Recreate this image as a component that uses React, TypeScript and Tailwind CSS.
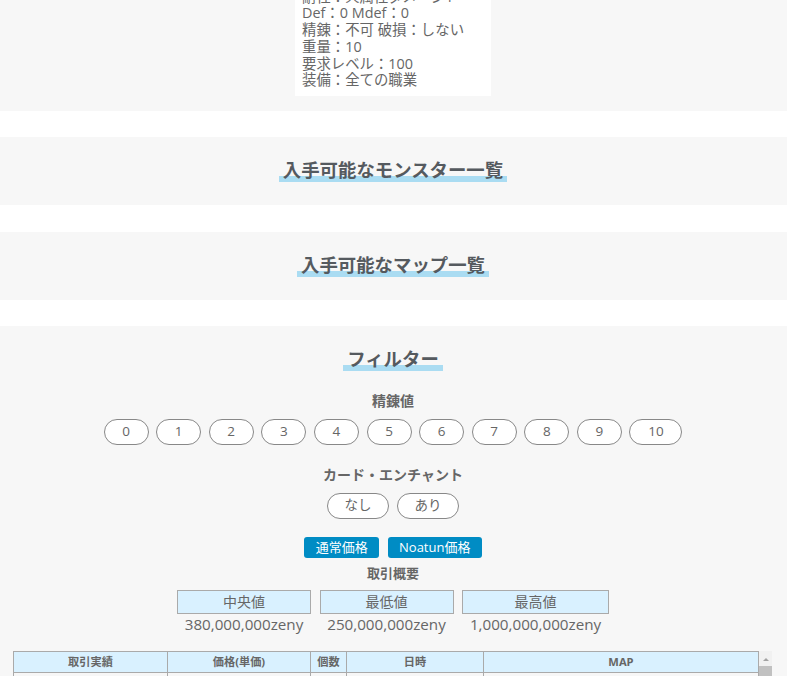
const font = "font-['Open_Sans','Noto_Sans_CJK_JP',sans-serif]"

const Heading = ({ text }: { text: string }) => (
  <div className="flex justify-center">
    <h2 className="px-1 text-[18.4px] leading-[24px] font-bold text-[#555a5f] bg-[linear-gradient(transparent_75%,#aadcf2_75%)]">
      {text}
    </h2>
  </div>
)

const Pill = ({ label, w }: { label: string; w: string }) => (
  <button className={`${w} h-[26px] rounded-full border border-[#888] bg-white text-[13.5px] leading-none text-[#666]`}>
    {label}
  </button>
)

const PriceCol = ({ title, value, w }: { title: string; value: string; w: string }) => (
  <div className={`${w} flex flex-col items-center`}>
    <div className="w-full h-[24px] border border-[#aaa] bg-[#d9f1ff] text-center text-[14px] leading-[22px] text-[#666]">{title}</div>
    <div className="text-[15.2px] leading-[21px] text-[#666]">{value}</div>
  </div>
)

export default function App() {
  const refine = ['0', '1', '2', '3', '4', '5', '6', '7', '8', '9']
  const cols = ['取引実績', '価格(単価)', '個数', '日時', 'MAP']
  return (
    <div lang="ja" className={`${font} w-[787px] h-[676px] overflow-hidden bg-white text-[#666]`}>
      <section className="h-[111px] pr-px bg-[#f7f7f7] flex justify-center items-start overflow-hidden">
        <div className="w-[196px] h-[96px] shrink-0 bg-white px-[7px] pb-[7px] flex flex-col justify-end text-[14.4px] leading-[16.7px]">
          <p>耐性：火属性ダメージ1</p>
          <p>Def：0 Mdef：0</p>
          <p>精錬：不可 破損：しない</p>
          <p>重量：10</p>
          <p>要求レベル：100</p>
          <p>装備：全ての職業</p>
        </div>
      </section>

      <section className="mt-[26px] h-[68px] pr-px bg-[#f7f7f7] pt-[21px]">
        <Heading text="入手可能なモンスター一覧" />
      </section>

      <section className="mt-[27px] h-[68px] pr-px bg-[#f7f7f7] pt-[21px]">
        <Heading text="入手可能なマップ一覧" />
      </section>

      <section className="mt-[26px] h-[350px] pr-px bg-[#f7f7f7] pt-[21px] overflow-hidden">
        <Heading text="フィルター" />

        <p className="mt-[21px] text-center text-[14px] leading-[18px] font-bold">精錬値</p>
        <div className="mt-[9px] flex justify-center gap-[7.6px]">
          {refine.map((n) => (
            <Pill key={n} label={n} w="w-[45px]" />
          ))}
          <Pill label="10" w="w-[53px]" />
        </div>

        <p className="mt-[21px] text-center text-[14px] leading-[18px] font-bold">カード・エンチャント</p>
        <div className="mt-[9px] flex justify-center gap-[8px]">
          <Pill label="なし" w="w-[62px]" />
          <Pill label="あり" w="w-[62px]" />
        </div>

        <div className="mt-[18px] flex justify-center gap-[8.5px]">
          <button className="w-[75px] h-[21px] rounded-[3px] bg-[#008cc4] text-white text-[13px] leading-none">通常価格</button>
          <button className="w-[94px] h-[21px] rounded-[3px] bg-[#008cc4] text-white text-[13px] leading-none">Noatun価格</button>
        </div>

        <p className="mt-[6px] text-center text-[13px] leading-[18px] font-bold">取引概要</p>

        <div className="mt-[8px] flex justify-center gap-[8.5px]">
          <PriceCol title="中央値" value="380,000,000zeny" w="w-[134px]" />
          <PriceCol title="最低値" value="250,000,000zeny" w="w-[134px]" />
          <PriceCol title="最高値" value="1,000,000,000zeny" w="w-[147px]" />
        </div>

        <div className="mt-[16px] ml-[13px] flex items-start">
          <table className="w-[746px] table-fixed border-collapse text-[11.2px] font-bold">
            <colgroup>
              <col className="w-[154px]" />
              <col className="w-[143px]" />
              <col className="w-[36px]" />
              <col className="w-[137px]" />
              <col />
            </colgroup>
            <thead>
              <tr className="h-[21px] bg-[#d9f1ff]">
                {cols.map((c) => (
                  <th key={c} className="border border-[#aaa]">{c}</th>
                ))}
              </tr>
            </thead>
            <tbody>
              <tr className="h-[22px]">
                {cols.map((c) => (
                  <td key={c} className="border border-[#aaa]" />
                ))}
              </tr>
            </tbody>
          </table>
          <div className="w-[13px] h-[30px] bg-[#f1f1f1] flex flex-col items-center">
            <svg width="8" height="15" viewBox="0 0 8 15"><path d="M1 10 L4 7 L7 10 Z" fill="#a3a3a3" /></svg>
            <div className="w-full h-[15px] bg-[#c1c1c1]" />
          </div>
        </div>
      </section>
    </div>
  )
}
